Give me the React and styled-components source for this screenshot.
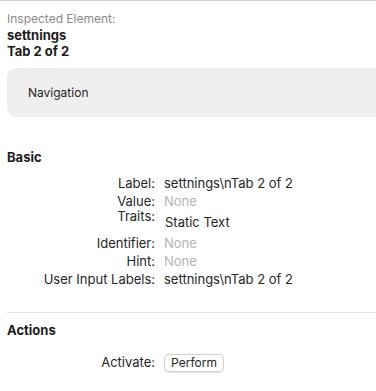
import { Fragment } from 'react';
import styled, { createGlobalStyle } from 'styled-components';

//= global =//
const Global = createGlobalStyle`
  html, body { margin: 0; padding: 0; background: #ffffff; }
  body {
    font-family: "Inter", "Liberation Sans", Arial, sans-serif;
    font-size: 13px;
    color: #1f1f1f;
    -webkit-font-smoothing: antialiased;
  }
`;

//= styling =//
const Panel = styled.div`
  border-top: 1px solid #d6d6d6;
  padding: 9px 0 0 7px;
  overflow: hidden;
  height: 381px;
`;
const Caption = styled.div`
  color: #8a8a8a;
  font-size: 12px;
  line-height: 17px;
`;
const Title = styled.div`
  font-weight: 700;
  line-height: 16px;
  color: #1c1c1c;
`;
const NavBox = styled.div`
  margin-top: 9px;
  margin-right: -10px;
  height: 49px;
  background: #efefef;
  border-radius: 9px;
  display: flex;
  align-items: center;
  padding-left: 21px;
  font-size: 12px;
  color: #1f1f1f;
`;
const SectionTitle = styled.h2`
  margin: ${(p) => p.$top}px 0 0 0;
  font-size: 13px;
  line-height: 16px;
  font-weight: 700;
  color: #1c1c1c;
`;
const Rows = styled.div`
  margin-top: ${(p) => p.$top}px;
  display: grid;
  grid-template-columns: 148px 1fr;
  column-gap: 9px;
  align-items: start;
`;
const Key = styled.div`
  text-align: right;
  line-height: 18px;
  margin-top: ${(p) => (p.$tall ? '-3px' : '0')};
  color: #262626;
`;
const Val = styled.div`
  line-height: 18px;
  padding: ${(p) => (p.$tall ? '3px 0 3px 1px' : '0')};
  color: ${(p) => (p.$muted ? '#b4b4b4' : '#262626')};
`;
const Divider = styled.hr`
  border: none;
  border-top: 1px solid #e3e3e3;
  margin: 24px 0 0 0;
`;
const Button = styled.button`
  display: block;
  font-family: inherit;
  font-size: 12px;
  color: #262626;
  background: #ffffff;
  border: 1px solid #d2d2d2;
  border-radius: 5px;
  box-shadow: 0 0.5px 1px rgba(0, 0, 0, 0.12);
  height: 18px;
  width: 60px;
  padding: 0;
  margin-top: 1px;
  line-height: 16px;
`;

const basic = [
  { k: 'Label:', v: 'settnings\\nTab 2 of 2' },
  { k: 'Value:', v: 'None', muted: true },
  { k: 'Traits:', v: 'Static Text', tall: true },
  { k: 'Identifier:', v: 'None', muted: true },
  { k: 'Hint:', v: 'None', muted: true },
  { k: 'User Input Labels:', v: 'settnings\\nTab 2 of 2' },
];

//= component definition =//
export default function App() {
  return (
    <>
      <Global />
      <Panel>
        <Caption>Inspected Element:</Caption>
        <Title>settnings</Title>
        <Title>Tab 2 of 2</Title>
        <NavBox>Navigation</NavBox>

        <SectionTitle $top={32}>Basic</SectionTitle>
        <Rows $top={9}>
          {basic.map((r) => (
            <Fragment key={r.k}>
              <Key $tall={r.tall}>{r.k}</Key>
              <Val $muted={r.muted} $tall={r.tall}>
                {r.v}
              </Val>
            </Fragment>
          ))}
        </Rows>

        <Divider />
        <SectionTitle $top={9}>Actions</SectionTitle>
        <Rows $top={15}>
          <Key>Activate:</Key>
          <div>
            <Button>Perform</Button>
          </div>
        </Rows>
      </Panel>
    </>
  );
}
